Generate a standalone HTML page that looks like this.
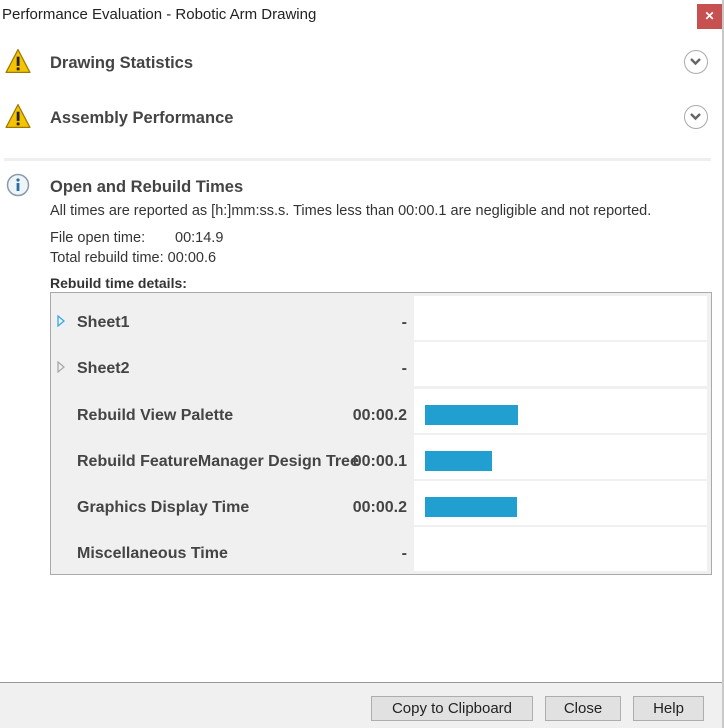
<!DOCTYPE html>
<html><head><style>
*{margin:0;padding:0;box-sizing:border-box}
body{width:724px;height:728px;background:#fff;font-family:"Liberation Sans",sans-serif;color:#333;position:relative;overflow:hidden}
.a{position:absolute}
.title{left:2px;top:6px;font-size:15px;color:#222}
.close{left:697px;top:4px;width:25px;height:25px;background:#c75050;color:#fff;font-size:12px;text-align:center;line-height:25px;font-weight:bold}
.edge{left:722px;top:0;width:2px;height:728px;background:#c8c8c8}
.h{font-size:16.5px;font-weight:bold;color:#444;left:50px}
.chev{left:684px;width:24px;height:24px;border:1.5px solid #aaa;border-radius:50%}
.t{font-size:14.5px;color:#333}
.tbl{left:50px;top:292px;width:662px;height:283px;background:#f0f0f0;border:1px solid #aaa}
.cell{left:414px;width:293px;background:#fff;height:44px}
.lbl{left:77px;font-size:16px;font-weight:bold;color:#444}
.val{font-size:16px;font-weight:bold;color:#444;right:317px;text-align:right}
.bar{left:425px;height:20px;background:#209fd0}
.foot{left:0;top:682px;width:722px;height:46px;background:#f0f0f0;border-top:1px solid #999}
.btn{top:696px;height:25px;background:#e1e1e1;border:1px solid #adadad;font-size:15px;text-align:center;line-height:23px;color:#222}
</style></head><body>
<div class="a edge"></div>
<div class="a title">Performance Evaluation - Robotic Arm Drawing</div>
<div class="a close">✕</div>

<svg class="a" style="left:5px;top:48px" width="26" height="26" viewBox="0 0 24 24"><path d="M12 1.5 L23 22.5 L1 22.5 Z" fill="#f5c400" stroke="#a07800" stroke-width="1.2" stroke-linejoin="round"/><rect x="10.8" y="8" width="2.6" height="8.5" fill="#222"/><rect x="10.8" y="18" width="2.6" height="2.6" fill="#222"/></svg>
<div class="a h" style="top:54px">Drawing Statistics</div>
<div class="a chev" style="top:50px"><svg width="21" height="21" viewBox="0 0 21 21"><path d="M6 8 L10.5 12.5 L15 8" stroke="#666" stroke-width="2.4" fill="none"/></svg></div>

<svg class="a" style="left:5px;top:103px" width="26" height="26" viewBox="0 0 24 24"><path d="M12 1.5 L23 22.5 L1 22.5 Z" fill="#f5c400" stroke="#a07800" stroke-width="1.2" stroke-linejoin="round"/><rect x="10.8" y="8" width="2.6" height="8.5" fill="#222"/><rect x="10.8" y="18" width="2.6" height="2.6" fill="#222"/></svg>
<div class="a h" style="top:109px">Assembly Performance</div>
<div class="a chev" style="top:105px"><svg width="21" height="21" viewBox="0 0 21 21"><path d="M6 8 L10.5 12.5 L15 8" stroke="#666" stroke-width="2.4" fill="none"/></svg></div>

<div class="a" style="left:4px;top:158px;width:707px;height:3px;background:#efefef"></div>

<svg class="a" style="left:6px;top:173px" width="24" height="24" viewBox="0 0 24 24"><circle cx="12" cy="12" r="10.5" fill="#eef4f8" stroke="#8a9aa8" stroke-width="1.5"/><circle cx="12" cy="7" r="1.6" fill="#2a6ea8"/><rect x="10.6" y="10" width="2.8" height="8" fill="#2a6ea8"/></svg>
<div class="a h" style="top:178px">Open and Rebuild Times</div>
<div class="a t" style="left:50px;top:203px">All times are reported as [h:]mm:ss.s. Times less than 00:00.1 are negligible and not reported.</div>
<div class="a t" style="left:50px;top:230px">File open time:</div>
<div class="a t" style="left:175px;top:230px">00:14.9</div>
<div class="a t" style="left:50px;top:250px">Total rebuild time:&nbsp;00:00.6</div>
<div class="a t" style="left:50px;top:275px;font-weight:bold;font-size:14px">Rebuild time details:</div>

<div class="a tbl"></div>
<div class="a cell" style="top:296px"></div>
<div class="a cell" style="top:342px"></div>
<div class="a cell" style="top:389px"></div>
<div class="a cell" style="top:435px"></div>
<div class="a cell" style="top:481px"></div>
<div class="a cell" style="top:527px"></div>
<div class="a bar" style="top:405px;width:93px"></div>
<div class="a bar" style="top:451px;width:67px"></div>
<div class="a bar" style="top:497px;width:92px"></div>

<svg class="a" style="left:57px;top:315px" width="8" height="12"><path d="M1 1 L7 6 L1 11 Z" fill="none" stroke="#3aa8e0" stroke-width="1.3"/></svg>
<svg class="a" style="left:57px;top:361px" width="8" height="12"><path d="M1 1 L7 6 L1 11 Z" fill="none" stroke="#aaa" stroke-width="1.3"/></svg>
<div class="a lbl" style="top:314px">Sheet1</div>
<div class="a lbl" style="top:360px">Sheet2</div>
<div class="a lbl" style="top:407px">Rebuild View Palette</div>
<div class="a lbl" style="top:453px">Rebuild FeatureManager Design Tree</div>
<div class="a lbl" style="top:499px">Graphics Display Time</div>
<div class="a lbl" style="top:545px">Miscellaneous Time</div>
<div class="a val" style="top:314px">-</div>
<div class="a val" style="top:360px">-</div>
<div class="a val" style="top:407px">00:00.2</div>
<div class="a val" style="top:453px">00:00.1</div>
<div class="a val" style="top:499px">00:00.2</div>
<div class="a val" style="top:545px">-</div>

<div class="a foot"></div>
<div class="a btn" style="left:371px;width:162px">Copy to Clipboard</div>
<div class="a btn" style="left:545px;width:76px">Close</div>
<div class="a btn" style="left:633px;width:71px">Help</div>
</body></html>
